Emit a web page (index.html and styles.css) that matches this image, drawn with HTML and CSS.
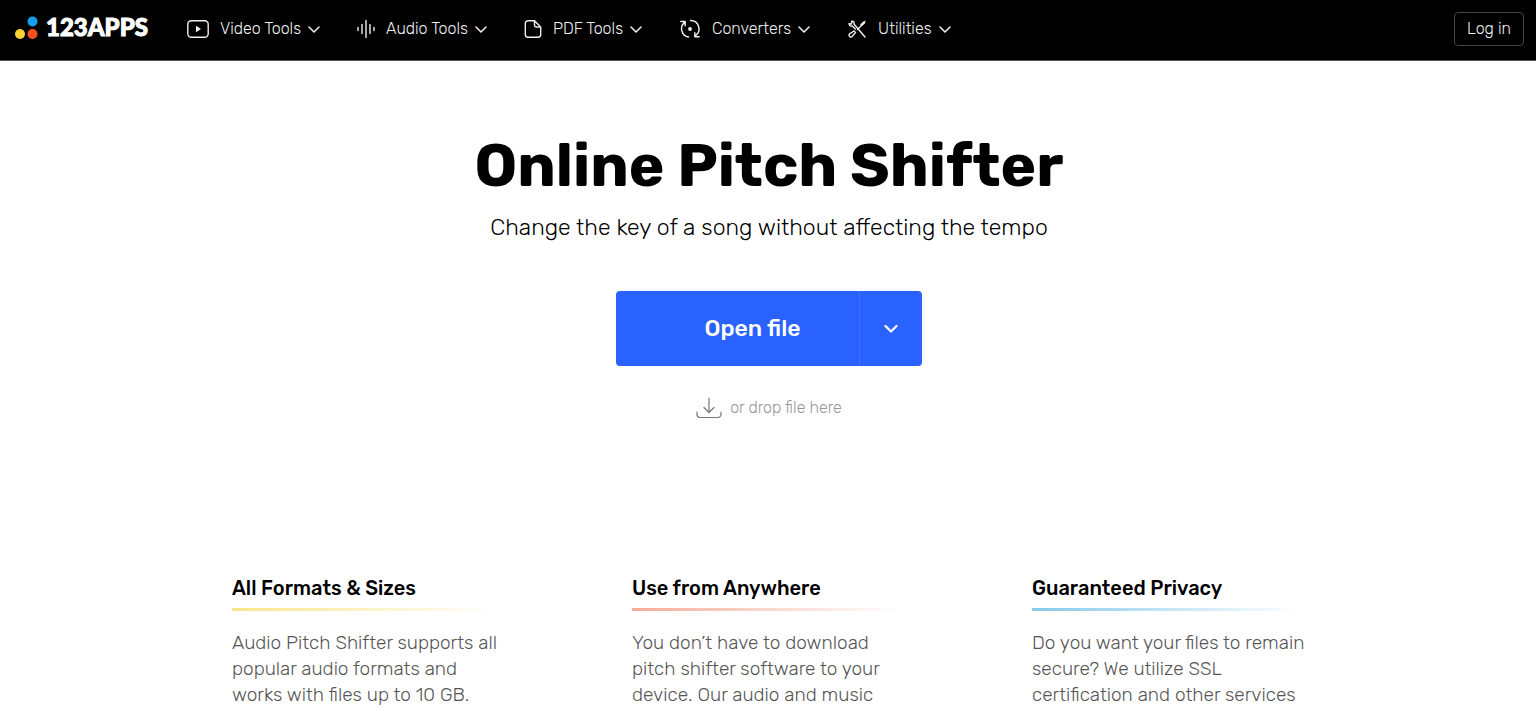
FILE: index.html
```html
<!DOCTYPE html>
<html lang="en">
<head>
<meta charset="utf-8">
<meta name="viewport" content="width=device-width, initial-scale=1">
<title>Online Pitch Shifter</title>
<link rel="stylesheet" href="styles.css">
</head>
<body>
<header class="header">
  <a class="logo" href="#">
    <svg class="logo-dots" width="24" height="24" viewBox="0 0 24 24" aria-hidden="true"><circle cx="18.500" cy="5.500" r="5" fill="#149ff0"/><circle cx="6" cy="18" r="5" fill="#fbd232"/><circle cx="18.500" cy="18" r="5" fill="#f4511e"/></svg>
    <span class="logo-text">123APPS</span>
  </a>
  <nav class="nav">
    <button class="nav-item" type="button">
      <svg class="icon" width="22" height="22" viewBox="0 0 22 22" aria-hidden="true"><rect x=".8" y="2.8" width="20.4" height="16.4" rx="3.5"/><path class="solid" d="M9 7.700l5 3.300-5 3.300z"/></svg>
      <span class="nav-label">Video Tools</span>
      <svg class="chevron" width="12" height="8" viewBox="0 0 12 8" aria-hidden="true"><path d="M1 1l5 5 5-5"/></svg>
    </button>
    <button class="nav-item" type="button">
      <svg class="icon" width="18" height="22" viewBox="0 0 18 22" aria-hidden="true"><path d="M1 9.500v3M5 6.500v9M9 2.500v17M13 6.500v9M17 9.500v3"/></svg>
      <span class="nav-label">Audio Tools</span>
      <svg class="chevron" width="12" height="8" viewBox="0 0 12 8" aria-hidden="true"><path d="M1 1l5 5 5-5"/></svg>
    </button>
    <button class="nav-item" type="button">
      <svg class="icon" width="18" height="22" viewBox="0 0 18 22" aria-hidden="true"><path d="M4 2.800h6.500L16.700 9v7.500a2.700 2.700 0 0 1-2.700 2.700H4A2.700 2.700 0 0 1 1.300 16.500v-11A2.700 2.700 0 0 1 4 2.800zM10.500 3v4.300A1.700 1.700 0 0 0 12.200 9h4.300"/></svg>
      <span class="nav-label">PDF Tools</span>
      <svg class="chevron" width="12" height="8" viewBox="0 0 12 8" aria-hidden="true"><path d="M1 1l5 5 5-5"/></svg>
    </button>
    <button class="nav-item" type="button">
      <svg class="icon" width="22" height="22" viewBox="0 0 22 22" aria-hidden="true"><path d="M9.500 19A8.300 8.300 0 0 1 5.600 4.400M1.800 3.500h4.400v4.200M11.500 2.500a8.300 8.300 0 0 1 4.900 15.100M20.200 18.800h-4.400v-4.200"/><circle class="solid" cx="11" cy="11" r="1.900"/></svg>
      <span class="nav-label">Converters</span>
      <svg class="chevron" width="12" height="8" viewBox="0 0 12 8" aria-hidden="true"><path d="M1 1l5 5 5-5"/></svg>
    </button>
    <button class="nav-item" type="button">
      <svg class="icon" width="20" height="22" viewBox="0 0 20 22" aria-hidden="true"><path d="M2 5.800l2.500.2.300-2.700c1.700-.2 2.800 1.200 2.300 3L18 19M2 5.800c.2 1.900 1.800 2.700 3.300 2.200l3 3M17 5l-6.500 6.500M7 13l1.500 1.500-3.300 3.900a1.800 1.800 0 0 1-2.700-2.500z"/><path class="solid" d="M16 3.700l2.800-1.200-1 2.800-3.300 3-1.500-1.500z"/></svg>
      <span class="nav-label">Utilities</span>
      <svg class="chevron" width="12" height="8" viewBox="0 0 12 8" aria-hidden="true"><path d="M1 1l5 5 5-5"/></svg>
    </button>
  </nav>
  <button class="login" type="button">Log in</button>
</header>
<main>
  <section class="hero">
    <h1 class="title">Online Pitch Shifter</h1>
    <p class="subtitle">Change the key of a song without affecting the tempo</p>
    <div class="open">
      <button class="open-main" type="button">Open file</button>
      <button class="open-more" type="button" aria-label="More sources"><svg width="14" height="10" viewBox="0 0 14 10" aria-hidden="true"><path d="M1.500 2l5.500 5.500L12.500 2"/></svg></button>
    </div>
    <div class="drop">
      <svg width="26" height="22" viewBox="0 0 26 22" aria-hidden="true"><path d="M13 1v14M8 10.500l5 5 5-5M1 15v2.500a3 3 0 0 0 3 3h18a3 3 0 0 0 3-3V15"/></svg>
      <span>or drop file here</span>
    </div>
  </section>
  <section class="features">
    <article class="feature yellow">
      <h2 class="feature-title">All Formats &amp; Sizes</h2>
      <p class="feature-text">Audio Pitch Shifter supports all<br>popular audio formats and<br>works with files up to 10 GB.</p>
    </article>
    <article class="feature red">
      <h2 class="feature-title">Use from Anywhere</h2>
      <p class="feature-text">You don’t have to download<br>pitch shifter software to your<br>device. Our audio and music</p>
    </article>
    <article class="feature blue">
      <h2 class="feature-title">Guaranteed Privacy</h2>
      <p class="feature-text">Do you want your files to remain<br>secure? We utilize SSL<br>certification and other services</p>
    </article>
  </section>
</main>
</body>
</html>
```

FILE: styles.css
```css
* { box-sizing: border-box; }
body { margin: 0; background: #fff; color: #000; font-family: Rubik, Roboto, "Liberation Sans", sans-serif; }
button { font: inherit; border: 0; background: none; color: inherit; padding: 0; cursor: pointer; }
svg { display: block; flex: none; fill: none; stroke: currentColor; stroke-linecap: round; stroke-linejoin: round; }

.header { display: flex; align-items: center; height: 61px; padding: 0 12px 3px 14px; background: #000; border-bottom: 1px solid #555; color: #f0f0f0; }
.logo { display: flex; align-items: center; gap: 8px; width: 173px; padding-bottom: 2px; color: #fff; text-decoration: none; }
.logo-dots { stroke: none; }
.logo-text { padding-bottom: 2px; font-family: Lato, sans-serif; font-weight: 900; font-size: 24px; line-height: 28px; -webkit-text-stroke: 1px #fff; }
.nav { display: flex; gap: 37px; flex: 1; }
.nav-item { display: flex; align-items: center; font-size: 16px; line-height: 24px; font-weight: 300; }
.nav-label { margin: 0 7px 0 11px; white-space: nowrap; }
.icon { stroke-width: 1.4; }
.solid { fill: currentColor; stroke: none; }
.chevron { stroke-width: 1.5; margin-top: 2px; }
.login { height: 34px; padding: 0 12px; border: 1px solid #444; border-radius: 4px; font-size: 16px; line-height: 24px; font-weight: 300; }

.hero { display: flex; flex-direction: column; align-items: center; padding: 69px 14px 0 16px; text-align: center; }
.title { margin: 0; font-size: 60px; line-height: 72px; font-weight: 700; }
.subtitle { margin: 9px 0 0; font-size: 23px; line-height: 32px; font-weight: 300; }
.open { display: flex; width: 306px; height: 75px; margin-top: 48px; border-radius: 4px; background: #2962ff; color: #fff; }
.open-main { flex: 1; padding: 0 0 2px 30px; font-size: 23px; font-weight: 500; }
.open-more { display: flex; align-items: center; justify-content: center; width: 63px; border-left: 1px solid #3f72ff; }
.open-more svg { stroke-width: 2.2; }
.drop { display: flex; align-items: center; gap: 8px; margin-top: 30px; font-size: 16px; line-height: 24px; font-weight: 300; color: #999; }
.drop svg { color: #777; stroke-width: 1.2; }

.features { display: grid; grid-template-columns: repeat(3, 272px); justify-content: center; column-gap: 128px; padding-top: 154px; }
.feature-title { margin: 0; padding-bottom: 6px; font-size: 20px; line-height: 28px; font-weight: 500; border-bottom: 3px solid; border-image: linear-gradient(90deg, var(--line), transparent 98%) 1; }
.feature-text { margin: 19px 0 0; font-size: 19px; line-height: 26px; font-weight: 300; color: #555; white-space: nowrap; }
.yellow { --line: #fbe58a; }
.red { --line: #f5ac98; }
.blue { --line: #86caeb; }
```
